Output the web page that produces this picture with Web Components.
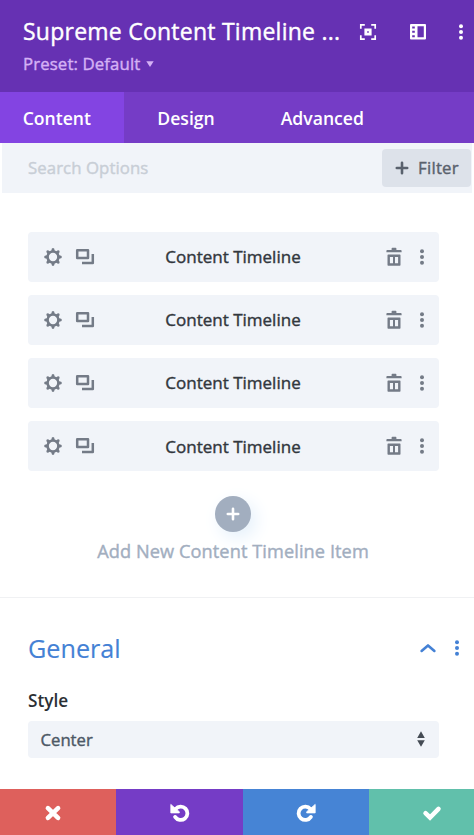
<!DOCTYPE html>
<html lang="en">
<head>
<meta charset="utf-8">
<title>Supreme Content Timeline</title>
<style>
html,body{margin:0;background:#fff}
body{font-family:"Open Sans","Noto Sans",sans-serif;font-weight:400;width:474px;height:835px;overflow:hidden;-webkit-text-stroke:.4px currentColor}
</style>
</head>
<body>
<settings-modal></settings-modal>
<script>
const define = (name, markup, setup) => customElements.define(name, class extends HTMLElement {
  connectedCallback() {
    if (this.shadowRoot) return;
    const root = this.attachShadow({mode: 'open'});
    const t = document.createElement('template');
    t.innerHTML = markup;
    root.append(t.content.cloneNode(true));
    if (setup) setup(this, root);
  }
});

const dots = '<g fill="currentColor"><circle cx="9" cy="3.2" r="2"/><circle cx="9" cy="9" r="2"/><circle cx="9" cy="14.8" r="2"/></g>';
const teeth = [0,45,90,135,180,225,270,315].map(a => `<path transform="rotate(${a} 9 9)" d="M7 4 7.8 .8Q9 -.7 10.2 .8L11 4z" fill="currentColor"/>`).join('');
const redo = '<path d="M13.9 12.9A6.7 6.7 0 1 1 13.4 4.9" fill="none" stroke="currentColor" stroke-width="3.8" stroke-linecap="round"/><path d="M18.2.4V8.9H9.7V7.7z" fill="currentColor" stroke="currentColor" stroke-width=".8" stroke-linejoin="round"/>';
const icons = {
  dots,
  focus: '<path d="M1.8 5.8V1.8H5.8M12.2 1.8H16.2V5.8M16.2 12.2V16.2H12.2M5.8 16.2H1.8V12.2" fill="none" stroke="currentColor" stroke-width="1.7"/><path d="M6.8 6.8H11.2V11.2H6.8z" fill="none" stroke="currentColor" stroke-width="2.8"/>',
  panel: '<path fill="currentColor" fill-rule="evenodd" d="M2 1H16Q17 1 17 2V15.5Q17 16.5 16 16.5H2Q1 16.5 1 15.5V2Q1 1 2 1ZM8.5 3.2V14.3H14.8V3.2ZM3.2 3.4V5.4H5.8V3.4ZM3.2 7.8V9.8H5.8V7.8ZM3.2 12.2V14.2H5.8V12.2Z"/>',
  gear: teeth + '<circle cx="9" cy="9" r="5.4" fill="none" stroke="currentColor" stroke-width="2.5"/>',
  copy: '<path d="M1.2 2.2H12V10H1.2zM16.8 6.1V15H6" fill="none" stroke="currentColor" stroke-width="2.5" stroke-linejoin="round"/>',
  trash: '<path fill="currentColor" fill-rule="evenodd" d="M6.6 2V.6Q6.6 -.2 7.4 -.2H10.6Q11.4 -.2 11.4 .6V2H15.9Q16.6 2 16.6 2.9V4.3H1.4V2.9Q1.4 2 2.1 2ZM2.5 7.2Q2.5 6.5 3.2 6.5H14.8Q15.5 6.5 15.5 7.2V17Q15.5 17.7 14.8 17.7H3.2Q2.5 17.7 2.5 17ZM4.9 9V15.2H8V9ZM10 9V15.2H13.1V9Z"/>',
  plus: '<path d="M9 3.8V14.2M3.8 9H14.2" fill="none" stroke="currentColor" stroke-width="2.6" stroke-linecap="round"/>',
  up: '<path d="M2.6 11.9 9 6.4 15.4 11.9" fill="none" stroke="currentColor" stroke-width="2.6" stroke-linecap="round" stroke-linejoin="round"/>',
  down: '<path d="M5.3 6.3H12.7L9 11.9z" fill="currentColor"/>',
  sort: '<path d="M9 1.3 12.8 7.9H5.2zM5.2 10.2H12.8L9 16.8z" fill="currentColor"/>',
  close: '<path d="M3.3 3.5 14.7 14.5M14.7 3.5 3.3 14.5" fill="none" stroke="currentColor" stroke-width="5.2" stroke-linecap="round"/>',
  redo,
  undo: `<g transform="matrix(-1 0 0 1 18 0)">${redo}</g>`,
  check: '<path d="M2.5 9.2 7 13.5 15.5 4.9" fill="none" stroke="currentColor" stroke-width="4.5" stroke-linecap="round"/>'
};
define('app-icon', '<style>:host{display:block;width:18px;height:18px;flex:none}svg{display:block;width:100%;height:100%;overflow:visible}</style><svg viewBox="0 0 18 18"></svg>',
  (el, root) => root.querySelector('svg').innerHTML = icons[el.getAttribute('name')]);

define('modal-header', `<style>
:host{display:flex;height:92px;box-sizing:border-box;padding:15px 4.5px 0 23px;background:#6631b3;color:#fff;align-items:flex-start}
.titles{width:336px}
h1{font-size:23px;letter-spacing:.24px;line-height:32px;font-weight:400;margin:0;white-space:nowrap}
.preset{display:flex;align-items:center;font-size:16.8px;letter-spacing:.12px;line-height:22px;margin-top:6px;color:#d5b1f5;white-space:nowrap}
.preset app-icon{margin-left:.5px}
.tools{display:flex;margin-top:8px}
.tools app-icon+app-icon{margin-left:32px}
.tools app-icon:last-child{margin-left:24.5px}
</style><div class="titles"><h1><slot></slot></h1><div class="preset"><slot name="preset"></slot><app-icon name="down"></app-icon></div></div>
<div class="tools"><app-icon name="focus"></app-icon><app-icon name="panel"></app-icon><app-icon name="dots"></app-icon></div>`);

define('tab-item', `<style>:host{display:flex;align-items:center;box-sizing:border-box;padding:1px 33px 0;font-size:17.6px;font-weight:600;-webkit-text-stroke:0;white-space:nowrap;color:#fff}
:host([active]){background:#8344e2;width:124.3px;padding:1px 0 0 22.7px}</style><slot></slot>`);
define('tab-bar', '<style>:host{display:flex;height:50.5px;background:#753cc6}</style><slot></slot>');

define('search-bar', `<style>:host{display:flex;align-items:center;height:50.5px;margin:0 2px;padding:0 1px 0 26px;background:#f1f4f9;justify-content:space-between;font-size:16.8px;letter-spacing:.07px;color:#c8ced6}
button{display:flex;align-items:center;width:89px;height:38px;border:0;border-radius:4px;background:#dde2ea;color:#59616d;font:inherit;letter-spacing:.25px;padding:0 0 0 11px;gap:7px}
</style><span><slot></slot></span><button><app-icon name="plus"></app-icon><span>Filter</span></button>`);

define('timeline-item', `<style>:host{display:grid;grid-template-columns:50px 1fr 46px;align-items:center;height:50px;box-sizing:border-box;padding:0 7.5px 0 16px;border-radius:4px;background:#f1f4f9;color:#747b87}
div{display:flex;justify-content:space-between}
.label{color:#32373d;font-size:17px;text-align:center;padding-right:13px;white-space:nowrap}
</style><div><app-icon name="gear"></app-icon><app-icon name="copy"></app-icon></div><span class="label"><slot></slot></span><div><app-icon name="trash"></app-icon><app-icon name="dots"></app-icon></div>`);

define('add-item', `<style>:host{display:flex;flex-direction:column;align-items:center;color:#a2aebf;font-size:18.2px;letter-spacing:.08px;line-height:26px;white-space:nowrap}
.b{display:grid;place-items:center;width:36px;height:36px;border-radius:50%;background:#a2aebf;color:#fff;box-shadow:5px 6px 18px #e4f0fb;margin-bottom:6px}
</style><div class="b"><app-icon name="plus"></app-icon></div><span><slot></slot></span>`);

define('option-group', `<style>:host{display:block;border-top:1px solid #f0f1f3;padding:31px 8.5px 0 28px}
header{display:flex;align-items:center;height:38px;color:#4481d5}
h2{flex:1;margin:0;font-size:25.2px;font-weight:400;-webkit-text-stroke:.15px}
app-icon+app-icon{margin-left:10.5px}
</style><header><h2><slot name="title"></slot></h2><app-icon name="up"></app-icon><app-icon name="dots"></app-icon></header><slot></slot>`);

define('select-field', `<style>:host{display:block;margin:22.5px 27px 0 0}
label{display:block;font-size:17.2px;line-height:24px;font-weight:600;-webkit-text-stroke:0;color:#2b2f34;margin-bottom:7.5px}
.box{display:flex;align-items:center;justify-content:space-between;height:37.5px;border-radius:4px;background:#f1f4f9;padding:0 8.5px 0 12.5px;font-size:16.7px;color:#4c5866}
app-icon{color:#444b54}
</style><label><slot name="label"></slot></label><div class="box"><span><slot></slot></span><app-icon name="sort"></app-icon></div>`);

define('action-bar', `<style>:host{display:grid;grid-template-columns:116px 126.5px 126.5px 1fr;height:46.5px;color:#fff}
div{display:grid;place-items:center;padding-top:3px}
</style><div style="background:#de605c;padding-right:10px"><app-icon name="close" style="width:16px;height:16px"></app-icon></div>
<div style="background:#753cc6;padding-left:2px"><app-icon name="undo"></app-icon></div>
<div style="background:#4684d5;padding-left:1px"><app-icon name="redo"></app-icon></div>
<div style="background:#61c0ab;padding-left:21px"><app-icon name="check"></app-icon></div>`);

define('settings-modal', `<style>:host{display:flex;flex-direction:column;width:474px;height:835px;background:#fff}
.items{display:flex;flex-direction:column;gap:13.2px;margin:38.5px 35.5px 0 28px}
add-item{margin:25px 8px 0 0}
option-group{margin-top:32.5px}
action-bar{margin-top:auto}
</style>
<modal-header>Supreme Content Timeline ...<span slot="preset">Preset: Default</span></modal-header>
<tab-bar><tab-item active>Content</tab-item><tab-item>Design</tab-item><tab-item>Advanced</tab-item></tab-bar>
<search-bar>Search Options</search-bar>
<div class="items"><timeline-item>Content Timeline</timeline-item><timeline-item>Content Timeline</timeline-item><timeline-item>Content Timeline</timeline-item><timeline-item>Content Timeline</timeline-item></div>
<add-item>Add New Content Timeline Item</add-item>
<option-group><span slot="title">General</span><select-field><span slot="label">Style</span>Center</select-field></option-group>
<action-bar></action-bar>`);
</script>
</body>
</html>
